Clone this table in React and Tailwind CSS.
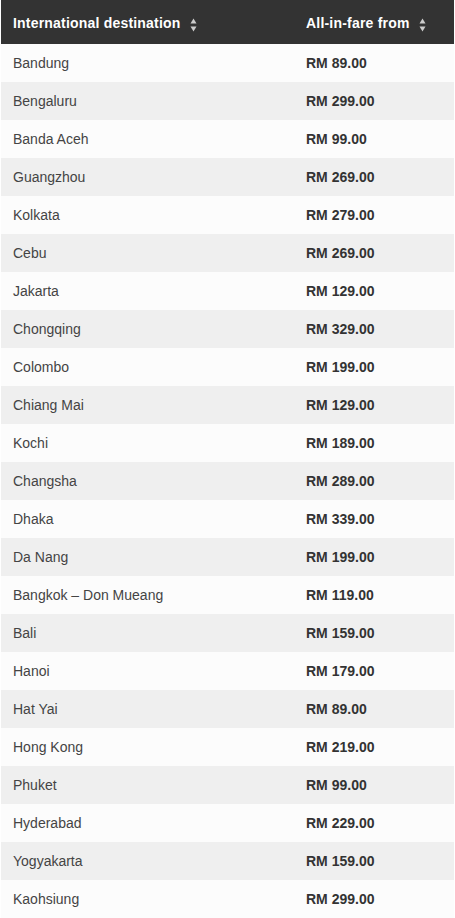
import React from 'react';

const fares = [
  ['Bandung', '89.00'],
  ['Bengaluru', '299.00'],
  ['Banda Aceh', '99.00'],
  ['Guangzhou', '269.00'],
  ['Kolkata', '279.00'],
  ['Cebu', '269.00'],
  ['Jakarta', '129.00'],
  ['Chongqing', '329.00'],
  ['Colombo', '199.00'],
  ['Chiang Mai', '129.00'],
  ['Kochi', '189.00'],
  ['Changsha', '289.00'],
  ['Dhaka', '339.00'],
  ['Da Nang', '199.00'],
  ['Bangkok – Don Mueang', '119.00'],
  ['Bali', '159.00'],
  ['Hanoi', '179.00'],
  ['Hat Yai', '89.00'],
  ['Hong Kong', '219.00'],
  ['Phuket', '99.00'],
  ['Hyderabad', '229.00'],
  ['Yogyakarta', '159.00'],
  ['Kaohsiung', '299.00'],
];

// little up/down sort arrows
const SortIcon = () => (
  <svg width="7" height="14" viewBox="0 0 7 14" className="ml-[9px] mt-[2px]">
    <path d="M3.5 0.5 L6.5 5.5 L0.5 5.5 Z" fill="#ccc" />
    <path d="M3.5 13.5 L6.5 8.5 L0.5 8.5 Z" fill="#ccc" />
  </svg>
);

export default function App() {
  return (
    <div className="w-[455px] bg-white px-[1px] font-[Liberation_Sans,Arial,sans-serif] text-[14px]">
      <div className="flex h-[44px] items-center bg-[#333] pt-[3px] text-white font-bold tracking-[0.2px]">
        <div className="flex w-[293px] items-center pl-[12px]">
          International destination
          <SortIcon />
        </div>
        <div className="flex flex-1 items-center pl-[12px]">
          All-in-fare from
          <SortIcon />
        </div>
      </div>
      {fares.map(([city, price], i) => (
        <div
          key={city}
          className={`flex h-[38px] items-center ${i % 2 === 0 ? 'bg-[#fcfcfc]' : 'bg-[#efefef]'}`}
        >
          <div className="w-[293px] pl-[12px] text-[#444]">{city}</div>
          <div className="flex-1 pl-[12px] font-bold text-[#333]">RM {price}</div>
        </div>
      ))}
    </div>
  );
}
